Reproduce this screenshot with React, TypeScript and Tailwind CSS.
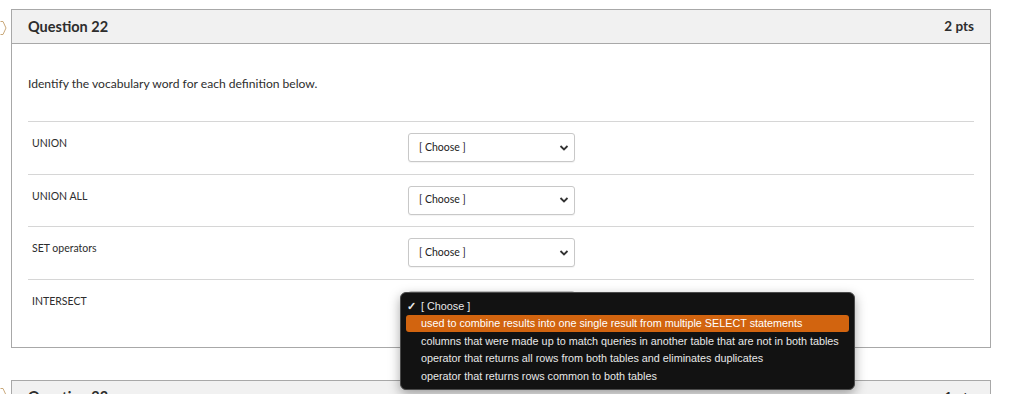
import React from 'react';

const ROWS = ['UNION', 'UNION ALL', 'SET operators', 'INTERSECT'];

const OPTIONS = [
  'used to combine results into one single result from multiple SELECT statements',
  'columns that were made up to match queries in another table that are not in both tables',
  'operator that returns all rows from both tables and eliminates duplicates',
  'operator that returns rows common to both tables',
];

function Flag() {
  return (
    <svg width="7" height="14" viewBox="0 0 7 14" className="shrink-0">
      <path d="M0.5 0.5 L3 0.5 L6 7 L3 13.5 L0.5 13.5" fill="none" stroke="#c9a87a" strokeWidth="1" />
    </svg>
  );
}

function FakeSelect({ open = false }: { open?: boolean }) {
  return (
    <div className="w-[167px] h-[29px] border border-[#c8c8c8] rounded-[3px] bg-white flex items-center justify-between pl-[10px] pr-[5px] shadow-[0_1px_1px_rgba(0,0,0,0.05)]">
      {/* the open one sits under the menu, its label is hidden */}
      <span className={`text-[10.5px] text-[#222] ${open ? 'invisible' : ''}`}>[ Choose ]</span>
      <svg width="10" height="8" viewBox="0 0 10 8">
        <path d="M1.5 2 L5 5.5 L8.5 2" fill="none" stroke="#333" strokeWidth="1.8" />
      </svg>
    </div>
  );
}

function Menu() {
  return (
    <div className="absolute left-[-8px] top-[12px] w-[455px] h-[98px] bg-[#121212] border border-[#4a4a4a] rounded-[6px] shadow-[0_4px_12px_rgba(0,0,0,0.35)] px-[5px] pt-[4px] font-['Liberation_Sans',Arial,sans-serif] text-[10.8px] leading-[14px] text-[#e8e8e8] z-10">
      <div className="h-[18px] flex items-center pl-[1px]">
        <span className="w-[14px] text-[11px] font-bold">✓</span>
        <span>[ Choose ]</span>
      </div>
      {OPTIONS.map((o, i) => (
        <div
          key={i}
          className={`h-[17.5px] flex items-center pl-[15px] rounded-[3px] whitespace-nowrap ${i === 0 ? 'bg-[#d2640f] text-white' : ''}`}
        >
          {o}
        </div>
      ))}
    </div>
  );
}

export default function App() {
  return (
    <div className="w-[1024px] h-[394px] overflow-hidden bg-white font-['Lato','Open_Sans',sans-serif] text-[#2d3b45]">
      <div className="flex pt-[9px]">
        <div className="w-[11px] pt-[12px]">
          <Flag />
        </div>
        <div className="w-[980px] border border-[#a8a8a8]">
          <div className="h-[34px] bg-[#f1f1f1] border-b border-[#a8a8a8] flex items-center justify-between px-[16px]">
            <span className="text-[14.5px] font-bold text-[#2d2d2d]">Question 22</span>
            <span className="text-[13.5px] font-bold text-[#2d2d2d]">2 pts</span>
          </div>
          <div className="px-[16px] pt-[31px] pb-[0px]">
            <p className="text-[12.1px] text-[#2d2d2d] h-[46px]">Identify the vocabulary word for each definition below.</p>
            {ROWS.map((r, i) => {
              const last = i === ROWS.length - 1;
              return (
                <div key={r} className={`border-t border-[#d6d6d6] flex ${last ? 'h-[68px]' : 'h-[52.5px]'}`}>
                  <div className="w-[380px] pl-[4px] pt-[14px] text-[10.5px] text-[#2d2d2d]">{r}</div>
                  <div className="relative pt-[11px]">
                    <FakeSelect open={last} />
                    {last && <Menu />}
                  </div>
                </div>
              );
            })}
          </div>
        </div>
      </div>
      <div className="flex pt-[32px]">
        <div className="w-[11px] pt-[8px]">
          <Flag />
        </div>
        <div className="w-[980px] border border-[#a8a8a8]">
          <div className="h-[34px] bg-[#f1f1f1] border-b border-[#a8a8a8] flex items-center justify-between px-[16px]">
            <span className="text-[14.5px] font-bold text-[#2d2d2d]">Question 23</span>
            <span className="text-[13.5px] font-bold text-[#2d2d2d]">1 pts</span>
          </div>
        </div>
      </div>
    </div>
  );
}
